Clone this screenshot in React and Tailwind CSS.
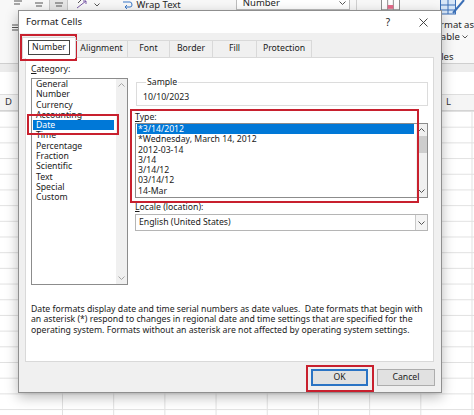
import React from 'react';

const categories = ['General', 'Number', 'Currency', 'Accounting', 'Date', 'Time', 'Percentage', 'Fraction', 'Scientific', 'Text', 'Special', 'Custom'];
const types = ['*3/14/2012', '*Wednesday, March 14, 2012', '2012-03-14', '3/14', '3/14/12', '03/14/12', '14-Mar'];
const tabs = [
  { name: 'Alignment', w: 'w-[52px]' },
  { name: 'Font', w: 'w-[42px]' },
  { name: 'Border', w: 'w-[43px]' },
  { name: 'Fill', w: 'w-[44px]' },
  { name: 'Protection', w: 'w-[55px]' },
];

function Chevron({ up = false, color = '#8a8a8a' }) {
  return (
    <svg width="7" height="4" viewBox="0 0 7 4">
      <path d={up ? 'M0.5 3.5 L3.5 0.5 L6.5 3.5' : 'M0.5 0.5 L3.5 3.5 L6.5 0.5'} fill="none" stroke={color} strokeWidth="1" />
    </svg>
  );
}

function Ribbon() {
  return (
    <div className="h-[63px] bg-[#f8f8f8] flex items-start text-[9.5px] text-[#262626]">
      {/* alignment group */}
      <div className="w-[112px] flex flex-col">
        <div className="h-[12px] flex items-start">
          <svg width="10" height="5" className="ml-[13px]" viewBox="0 0 10 5">
            <path d="M1 1 H9 M1 4 H7" stroke="#555" strokeWidth="1" />
          </svg>
          <svg width="10" height="8" className="ml-[11px]" viewBox="0 0 10 8">
            <path d="M1 3 H9 M2 6 H8" stroke="#555" strokeWidth="1" />
          </svg>
          <div className="ml-[5px] -mt-[2px] w-[19px] h-[13px] border border-[#c6c6c6] bg-[#e6e6e6] flex items-center justify-center">
            <svg width="10" height="8" viewBox="0 0 10 8">
              <path d="M1 2 H9 M2 5 H8" stroke="#555" strokeWidth="1" />
            </svg>
          </div>
          <svg width="14" height="9" className="ml-[8px]" viewBox="0 0 14 9">
            <path d="M1 8 L10 1 M7 1 H10 V4" stroke="#7a5aa8" strokeWidth="1" fill="none" />
            <path d="M2 3 L5 0" stroke="#555" strokeWidth="1" />
          </svg>
          <svg width="6" height="4" className="ml-[4px] mt-[3px]" viewBox="0 0 6 4">
            <path d="M0.5 0.5 L3 3 L5.5 0.5" stroke="#555" fill="none" />
          </svg>
        </div>
        <svg width="8" height="8" className="ml-[12px] mt-[12px]" viewBox="0 0 8 8">
          <path d="M0 1 H8 M0 3.5 H8 M0 6 H8" stroke="#555" strokeWidth="1" />
        </svg>
      </div>
      {/* wrap text */}
      <div className="ml-[16px] -mt-[1px] flex items-center h-[11px] whitespace-nowrap">
        <svg width="11" height="10" viewBox="0 0 11 10">
          <path d="M1 2 H8 Q10 2 10 5 Q10 7 8 7 H4" stroke="#3a78c9" fill="none" />
          <path d="M5 5 L3 7 L5 9" stroke="#3a78c9" fill="none" />
        </svg>
        <span className="ml-[3px] leading-none">Wrap Text</span>
      </div>
      {/* number format dropdown */}
      <div className="ml-[55px] -mt-[4px] w-[120px] h-[14px] bg-white border border-[#bdbdbd] flex items-end pb-[1px] pl-[6px] pr-[3px]">
        <span className="leading-[10px]">Number</span>
        <span className="ml-auto mb-[3px]">
          <Chevron color="#555" />
        </span>
      </div>
      <div className="ml-[6px] w-px h-[10px] bg-[#d0d0d0]" />
      {/* conditional formatting */}
      <svg width="20" height="11" className="ml-[24px]" viewBox="0 0 20 11">
        <rect x="0.5" y="-2" width="19" height="12" fill="#fff" stroke="#8a8a8a" />
        <path d="M7 -2 V10 M13 -2 V10" stroke="#8a8a8a" />
        <rect x="7" y="5" width="6" height="4" fill="#e66b8a" />
      </svg>
      {/* format as table */}
      <div className="ml-[36px] flex flex-col whitespace-nowrap">
        <svg width="26" height="16" className="ml-[4px]" viewBox="0 0 26 16">
          <rect x="0.5" y="-2" width="15" height="16" fill="#d7e6f7" stroke="#3b6fb6" />
          <path d="M0.5 5 H15.5 M0.5 10 H15.5 M8 -2 V14" stroke="#3b6fb6" />
          <path d="M24 0 L13 13" stroke="#3b6fb6" strokeWidth="2" />
        </svg>
        <span className="leading-[12px] mt-[3px] -ml-[2px]">ormat as</span>
        <span className="leading-[12px] flex items-center">
          Table
          <svg width="6" height="4" className="ml-[2px]" viewBox="0 0 6 4">
            <path d="M0.5 0.5 L3 3 L5.5 0.5" stroke="#555" fill="none" />
          </svg>
        </span>
        <span className="leading-[12px] mt-[8px]">yles</span>
      </div>
    </div>
  );
}

function Dialog() {
  return (
    <div className="absolute left-[18px] top-[10px] w-[424px] h-[383px] border border-[#8f8f8f] bg-[#f0f0f0] shadow-[0_4px_12px_rgba(0,0,0,0.28)] flex flex-col text-[8.7px] text-[#1a1a1a]">
      <div className="h-[22px] bg-white flex items-center pl-[7px]">
        <span className="text-[9.6px]">Format Cells</span>
        <span className="ml-auto text-[10px]">?</span>
        <svg width="9" height="9" className="ml-[29px] mr-[13px]" viewBox="0 0 9 9">
          <path d="M0.5 0.5 L8.5 8.5 M8.5 0.5 L0.5 8.5" stroke="#333" strokeWidth="0.9" />
        </svg>
      </div>
      <div className="relative z-10 h-[24px] flex items-end pl-[3px]">
        <div className="w-[54px] h-[21px] -mb-px bg-white border border-b-0 border-[#d9d9d9] flex items-center justify-center pb-[2px]">
          <span className="border border-[#444] px-[3px] leading-[13px]">Number</span>
        </div>
        {tabs.map((t) => (
          <div key={t.name} className={`${t.w} h-[17px] border border-b-0 border-l-0 border-[#d9d9d9] flex items-center justify-center`}>
            {t.name}
          </div>
        ))}
      </div>
      <div className="ml-[6px] w-[409px] h-[305px] bg-white border border-[#d9d9d9] px-[5px] pt-[6px]">
        <div className="flex items-start gap-[7px]">
          <div className="w-[97px] flex flex-col">
            <div className="leading-[10px]">
              <u>C</u>ategory:
            </div>
            <div className="mt-[4px] h-[207px] border border-[#8c8c8c] flex">
              <div className="flex-1 flex flex-col pl-px">
                {categories.map((c) => (
                  <div key={c} className={`leading-[10.3px] pl-[3px] ${c === 'Date' ? 'bg-[#0078d7] text-white' : ''}`}>
                    {c}
                  </div>
                ))}
              </div>
              <div className="w-[11px] ml-[2px] bg-[#f0f0f0] flex flex-col items-center justify-between py-[4px]">
                <Chevron up color="#a6a6a6" />
                <Chevron color="#a6a6a6" />
              </div>
            </div>
          </div>
          <div className="w-[293px] flex flex-col mt-[13px]">
            <fieldset className="border border-[#dcdcdc] pl-[6px] pt-[5px] pb-[3px] ml-px">
              <legend className="ml-[3px] px-[1px] leading-[10px]">Sample</legend>
              <div className="leading-[10px]">10/10/2023</div>
            </fieldset>
            <div className="mt-[6px] leading-[10px]">
              <u>T</u>ype:
            </div>
            <div className="mt-px h-[75px] border border-[#8c8c8c] flex">
              <div className="flex-1 flex flex-col pl-px">
                {types.map((t, i) => (
                  <div key={t} className={`leading-[10.3px] pl-[1px] ${i === 0 ? 'bg-[#0078d7] text-white' : ''}`}>
                    {t}
                  </div>
                ))}
              </div>
              <div className="w-[11px] ml-[2px] bg-[#f0f0f0] flex flex-col items-center py-[4px]">
                <Chevron up color="#555" />
                <div className="mt-[4px] w-[10px] h-[17px] bg-[#cdcdcd]" />
                <div className="mt-auto">
                  <Chevron color="#555" />
                </div>
              </div>
            </div>
            <div className="mt-[4px] leading-[10px]">
              <u>L</u>ocale (location):
            </div>
            <div className="mt-[2px] h-[17px] border border-[#b5b5b5] flex items-center pl-[3px]">
              <span>English (United States)</span>
              <div className="ml-auto h-full w-[12px] border-l border-[#c8c8c8] bg-[#f4f4f4] flex items-center justify-center">
                <Chevron color="#555" />
              </div>
            </div>
          </div>
        </div>
        <p className="mt-[19px] leading-[10.3px] whitespace-nowrap">
          Date formats display date and time serial numbers as date values.{'\u00a0 '}Date formats that begin with
          <br />
          an asterisk (*) respond to changes in regional date and time settings that are specified for the
          <br />
          operating system. Formats without an asterisk are not affected by operating system settings.
        </p>
      </div>
      <div className="mt-[7px] flex justify-end gap-[9px] pr-[6px]">
        <button className="w-[57px] h-[17px] bg-[#e1e1e1] border-2 border-[#2a73c4] flex items-center justify-center">OK</button>
        <button className="w-[58px] h-[17px] bg-[#e1e1e1] border border-[#adadad] flex items-center justify-center">Cancel</button>
      </div>
    </div>
  );
}

// red annotation boxes drawn over the screenshot
function Mark({ className }) {
  return <div className={`absolute border-2 border-[#c8202e] ${className}`} />;
}

export default function App() {
  return (
    <div className="relative w-[474px] h-[415px] overflow-hidden bg-white font-['Noto_Sans',sans-serif] flex flex-col">
      <Ribbon />
      <div className="h-[9px] shrink-0 bg-[#ececec] border-t border-[#cfcfcf]" />
      <div className="h-[23px] shrink-0 border-b border-[#dedede]" />
      <div className="h-[16px] shrink-0 bg-[#f5f5f5] border-b border-[#d4d4d4] flex items-center text-[9.5px] text-[#333]">
        <span className="ml-[5px]">D</span>
        <span className="ml-auto mr-[23px]">L</span>
      </div>
      <div className="flex-1 bg-[linear-gradient(to_bottom,#e1e1e1_1px,transparent_1px)] bg-[size:100%_15.7px]">
        <div className="ml-[12px] h-full bg-[linear-gradient(to_right,#e1e1e1_1px,transparent_1px)] bg-[size:51.2px_100%] bg-[position:50px_0]" />
      </div>
      <Dialog />
      <Mark className="left-[20px] top-[34px] w-[57px] h-[27px]" />
      <Mark className="left-[27px] top-[114px] w-[92px] h-[21px]" />
      <Mark className="left-[130px] top-[109px] w-[289px] h-[94px]" />
      <Mark className="left-[306px] top-[365px] w-[68px] h-[27px]" />
    </div>
  );
}
